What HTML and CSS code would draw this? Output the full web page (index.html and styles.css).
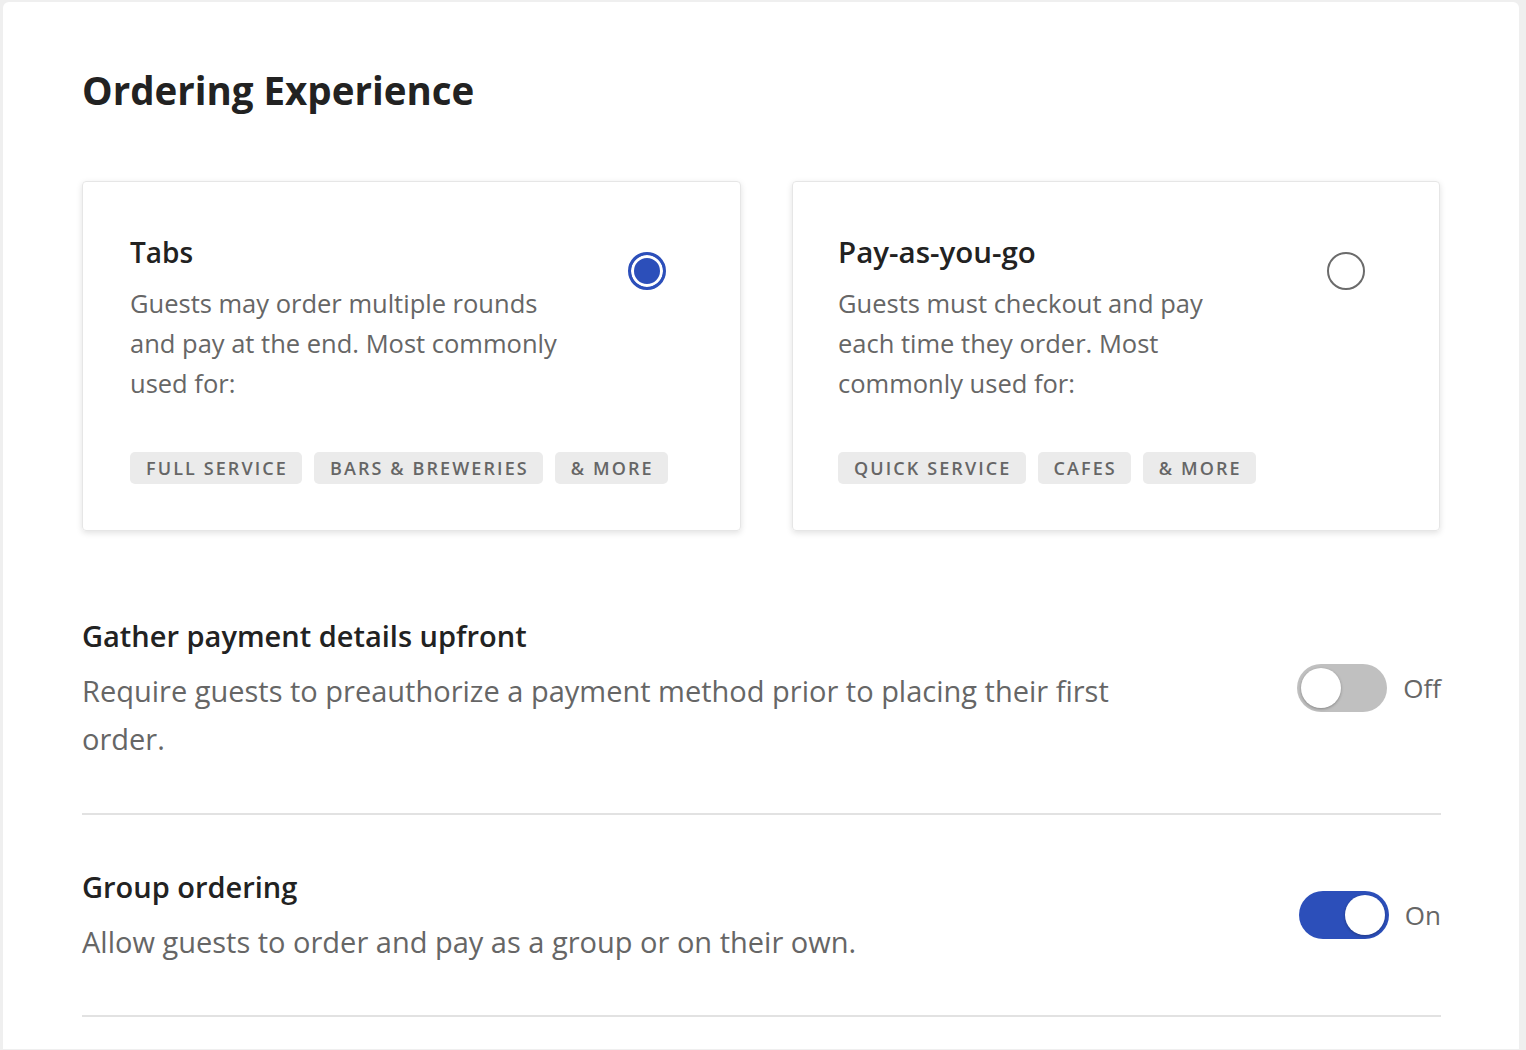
FILE: index.html
```html
<!DOCTYPE html>
<html lang="en">
<head>
  <meta charset="UTF-8" />
  <meta name="viewport" content="width=device-width, initial-scale=1" />
  <title>Ordering Experience</title>
  <link rel="stylesheet" href="styles.css">
</head>
<body>

  <div class="panel">
    <h1 class="panel-title">Ordering Experience</h1>

    <div class="options">
      <label class="option">
        <div class="option-text">
          <h2>Tabs</h2>
          <p>Guests may order multiple rounds and pay at the end. Most commonly used for:</p>
        </div>
        <span class="radio radio-on"></span>
        <div class="tags">
          <span class="tag">Full service</span>
          <span class="tag">Bars &amp; breweries</span>
          <span class="tag">&amp; more</span>
        </div>
      </label>

      <label class="option">
        <div class="option-text">
          <h2>Pay-as-you-go</h2>
          <p>Guests must checkout and pay each time they order. Most commonly used for:</p>
        </div>
        <span class="radio"></span>
        <div class="tags">
          <span class="tag">Quick service</span>
          <span class="tag">Cafes</span>
          <span class="tag">&amp; more</span>
        </div>
      </label>
    </div>

    <div class="setting">
      <div class="setting-text">
        <h3>Gather payment details upfront</h3>
        <p>Require guests to preauthorize a payment method prior to placing their first order.</p>
      </div>
      <div class="switch">
        <span class="toggle"></span>
        <span class="switch-label">Off</span>
      </div>
    </div>

    <div class="setting">
      <div class="setting-text">
        <h3>Group ordering</h3>
        <p>Allow guests to order and pay as a group or on their own.</p>
      </div>
      <div class="switch">
        <span class="toggle toggle-on"></span>
        <span class="switch-label">On</span>
      </div>
    </div>
  </div>

</body>
</html>
```

FILE: styles.css
```css
body {
  margin: 0;
  padding: 2px 7px 0 3px;
  background: #efefef;
  font-family: "Open Sans", "Liberation Sans", sans-serif;
  color: #222;
}

.panel {
  background: #fff;
  border-radius: 6px 6px 0 0;
  padding: 0 78px 32px 79px;
}

.panel-title {
  margin: 0;
  padding-top: 60px;
  font-size: 38.5px;
  font-weight: 700;
  line-height: 56px;
  color: #222;
}

.options {
  display: grid;
  grid-template-columns: 659px 648px;
  gap: 51px;
  margin-top: 63px;
}

.option {
  display: grid;
  grid-template-columns: 1fr 38px;
  column-gap: 68px;
  padding: 53px 74px 46px 47px;
  border: 1px solid #e6e6e6;
  border-radius: 4px;
  box-shadow: 0 2px 6px rgba(0, 0, 0, 0.12);
  cursor: pointer;
}

.option + .option {
  padding-left: 45px;
}

.option-text h2 {
  margin: 0;
  font-size: 28px;
  font-weight: 600;
  line-height: 34px;
  color: #222;
}

.option + .option .option-text h2 {
  font-size: 29.5px;
}

.option-text p {
  margin: 14px 0 0;
  font-size: 25.5px;
  line-height: 40px;
  color: #666;
}

.radio {
  box-sizing: border-box;
  width: 38px;
  height: 38px;
  margin-top: 17px;
  border: 2.5px solid #6b6b6b;
  border-radius: 50%;
}

.radio-on {
  border: 3px solid #2c4fba;
  background: #2c4fba;
  box-shadow: inset 0 0 0 3px #fff;
}

.tags {
  grid-column: 1 / -1;
  display: flex;
  gap: 12px;
  margin-top: 49px;
  white-space: nowrap;
}

.tag {
  padding: 0 14px 0 16px;
  height: 32px;
  line-height: 32px;
  background: #ebebeb;
  border-radius: 5px;
  font-size: 18px;
  font-weight: 600;
  letter-spacing: 2.1px;
  text-transform: uppercase;
  color: #666;
}

.setting {
  display: flex;
  justify-content: space-between;
  align-items: center;
  padding: 87px 0 50px;
  border-bottom: 2px solid #e2e2e2;
}

.setting + .setting {
  padding-top: 54px;
  padding-bottom: 49px;
}

.setting-text h3 {
  margin: 0;
  font-size: 29px;
  font-weight: 600;
  line-height: 36px;
  color: #222;
}

.setting-text p {
  margin: 13px 0 0;
  width: 1060px;
  font-size: 29px;
  line-height: 48px;
  color: #666;
}

.switch {
  display: flex;
  align-items: center;
  gap: 16px;
  margin-bottom: 6px;
}

.toggle {
  position: relative;
  width: 90px;
  height: 48px;
  border-radius: 24px;
  background: #c0c0c0;
}

.toggle::after {
  content: "";
  position: absolute;
  top: 4px;
  left: 4px;
  width: 40px;
  height: 40px;
  border-radius: 50%;
  background: #fff;
  box-shadow: 0 1px 3px rgba(0, 0, 0, 0.3);
}

.toggle-on {
  background: #2c4fba;
}

.toggle-on::after {
  left: 46px;
}

.switch-label {
  font-size: 26px;
  color: #666;
}
```
